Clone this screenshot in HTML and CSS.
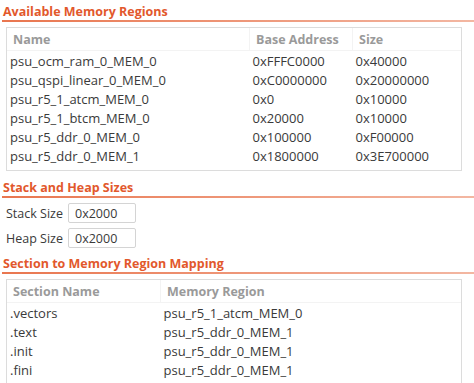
FILE: index.html
```html
<!DOCTYPE html>
<html>
<head>
    <title>Linker Script</title>
    <link rel="stylesheet" href="styles.css">
</head>
<body>
    <h2 class="section-title">Available Memory Regions</h2>
    <div class="table-frame">
        <table class="regions">
            <thead>
                <tr>
                    <th class="col-name">Name</th>
                    <th class="col-base">Base Address</th>
                    <th>Size</th>
                </tr>
            </thead>
            <tbody>
                <tr><td>psu_ocm_ram_0_MEM_0</td><td>0xFFFC0000</td><td>0x40000</td></tr>
                <tr><td>psu_qspi_linear_0_MEM_0</td><td>0xC0000000</td><td>0x20000000</td></tr>
                <tr><td>psu_r5_1_atcm_MEM_0</td><td>0x0</td><td>0x10000</td></tr>
                <tr><td>psu_r5_1_btcm_MEM_0</td><td>0x20000</td><td>0x10000</td></tr>
                <tr><td>psu_r5_ddr_0_MEM_0</td><td>0x100000</td><td>0xF00000</td></tr>
                <tr><td>psu_r5_ddr_0_MEM_1</td><td>0x1800000</td><td>0x3E700000</td></tr>
            </tbody>
        </table>
    </div>

    <h2 class="section-title">Stack and Heap Sizes</h2>
    <div class="sizes">
        <div class="size-row">
            <label for="stackSize">Stack Size</label>
            <input type="text" id="stackSize" value="0x2000">
        </div>
        <div class="size-row">
            <label for="heapSize">Heap Size</label>
            <input type="text" id="heapSize" value="0x2000">
        </div>
    </div>

    <h2 class="section-title">Section to Memory Region Mapping</h2>
    <div class="table-frame">
        <table class="mapping">
            <thead>
                <tr>
                    <th class="col-section">Section Name</th>
                    <th>Memory Region</th>
                </tr>
            </thead>
            <tbody>
                <tr><td>.vectors</td><td>psu_r5_1_atcm_MEM_0</td></tr>
                <tr><td>.text</td><td>psu_r5_ddr_0_MEM_1</td></tr>
                <tr><td>.init</td><td>psu_r5_ddr_0_MEM_1</td></tr>
                <tr><td>.fini</td><td>psu_r5_ddr_0_MEM_1</td></tr>
            </tbody>
        </table>
    </div>
</body>
</html>
```
FILE: styles.css
```css
body {
    margin: 0;
    padding-top: 1px;
    font-family: "Open Sans", "Noto Sans", sans-serif;
    font-size: 12.5px;
    color: #3a3a3a;
    background-color: #fff;
}

.section-title {
    margin: 0 0 5px 2px;
    padding: 3px 0 3px 1px;
    font-size: 12.5px;
    font-weight: bold;
    color: #e2582c;
    line-height: 15px;
    background: linear-gradient(to right, #e9764f, #f3b7a2) no-repeat left bottom / 100% 2px;
}

.table-frame {
    margin: 0 12px 6px 6px;
    border: 1px solid #dcdcdc;
    padding-bottom: 5px;
}

table {
    width: 100%;
    border-collapse: collapse;
}

th {
    height: 22px;
    padding: 0 0 0 6px;
    text-align: left;
    font-weight: bold;
    color: #9a9a9a;
    border-right: 1px solid #f3f3f3;
    border-bottom: 1px solid #f3f3f3;
}

th:last-child {
    border-right: none;
}

td {
    height: 19px;
    padding: 0 0 0 3px;
    font-size: 13px;
    white-space: nowrap;
}

.col-name {
    width: 236px;
}

.col-base {
    width: 96px;
}

.col-section {
    width: 147px;
}

.sizes {
    margin: 0 0 0 6px;
}

.size-row {
    display: flex;
    align-items: center;
    gap: 4px;
    margin-bottom: 5px;
}

.size-row label {
    width: 58px;
}

.size-row input {
    width: 68px;
    height: 20px;
    box-sizing: border-box;
    border: 1px solid #d4d4d4;
    border-radius: 2px;
    padding: 0 6px;
    font-family: inherit;
    font-size: 12.5px;
    color: #3a3a3a;
}
```
